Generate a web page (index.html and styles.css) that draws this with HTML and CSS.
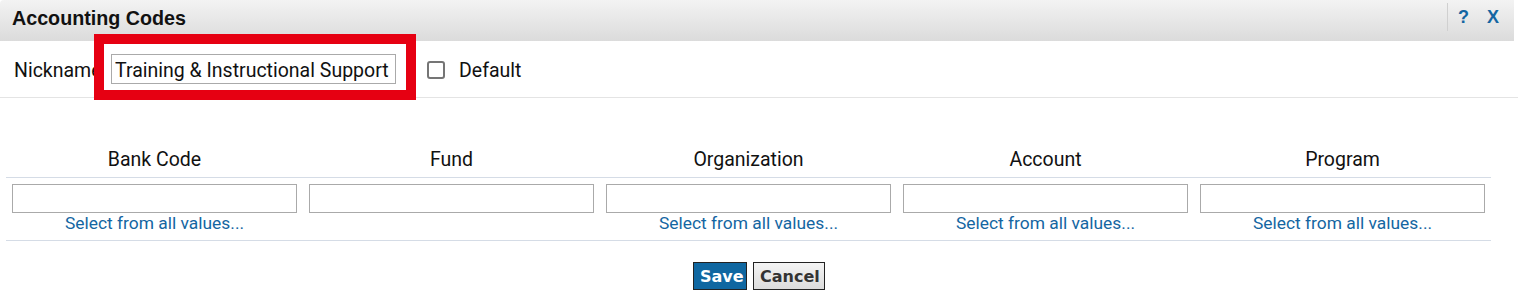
FILE: index.html
```html
<!DOCTYPE html>
<html lang="en">
<head>
    <meta charset="UTF-8">
    <title>Accounting Codes</title>
    <link rel="stylesheet" href="styles.css">
</head>
<body>
    <div class="dialog">
        <!-- Title bar -->
        <header class="titlebar">
            <h1>Accounting Codes</h1>
            <div class="tools">
                <a href="#" class="tool">?</a>
                <a href="#" class="tool">X</a>
            </div>
        </header>

        <!-- Nickname row -->
        <div class="nick-row">
            <label class="nick-label" for="nick">Nickname</label>
            <input id="nick" class="text-input nick-input" type="text" value="Training &amp; Instructional Support">
            <label class="default-check"><span class="box"></span>Default</label>
            <div class="highlight"></div>
        </div>

        <!-- Code segments -->
        <div class="codes">
            <div class="col-head">Bank Code</div>
            <div class="col-head">Fund</div>
            <div class="col-head">Organization</div>
            <div class="col-head">Account</div>
            <div class="col-head">Program</div>

            <div class="cell"><input class="text-input" type="text"><a href="#" class="pick">Select from all values...</a></div>
            <div class="cell"><input class="text-input" type="text"></div>
            <div class="cell"><input class="text-input" type="text"><a href="#" class="pick">Select from all values...</a></div>
            <div class="cell"><input class="text-input" type="text"><a href="#" class="pick">Select from all values...</a></div>
            <div class="cell"><input class="text-input" type="text"><a href="#" class="pick">Select from all values...</a></div>
        </div>

        <div class="actions">
            <button class="btn btn-save">Save</button>
            <button class="btn btn-cancel">Cancel</button>
        </div>
    </div>
</body>
</html>
```

FILE: styles.css
```css
/* Dialog layout */
body {
    margin: 0;
    background: #fff;
    font-family: Roboto, "Liberation Sans", sans-serif;
    color: #111;
}
.dialog {
    width: 1518px;
    height: 293px;
    overflow: hidden;
}
.titlebar {
    height: 41px;
    display: flex;
    align-items: center;
    justify-content: space-between;
    background: linear-gradient(#f3f3f3, #dbdbdb);
    border-top-left-radius: 4px;
    margin-right: 4px;
}
.titlebar h1 {
    margin: 0 0 0 12px;
    font-family: "Liberation Sans", Arial, sans-serif;
    font-size: 19.7px;
    font-weight: bold;
    color: #111;
    position: relative;
    top: -2px;
}
.tools {
    display: flex;
    align-items: center;
    height: 28px;
    border-left: 1px solid #d0d0d0;
    margin-bottom: 8px;
    padding-left: 10px;
}
.tool {
    font-family: "Liberation Sans", Arial, sans-serif;
    font-size: 18px;
    font-weight: bold;
    color: #1466a2;
    text-decoration: none;
    margin-right: 18px;
    line-height: 28px;
}
.tool:last-child {
    margin-right: 15px;
}

/* Nickname row */
.nick-row {
    position: relative;
    height: 56px;
    display: flex;
    align-items: center;
    border-bottom: 1px solid #e4e4e4;
    padding-left: 14px;
}
.nick-label {
    font-size: 19.5px;
    width: 97px;
    white-space: nowrap;
    padding-top: 2px;
}
.text-input {
    box-sizing: border-box;
    width: 285px;
    height: 29px;
    border: 1px solid #aaa;
    font-family: Roboto, sans-serif;
    font-size: 19.5px;
    padding: 0 3px;
    color: #111;
    outline: none;
}
.nick-input {
    height: 30px;
    padding-top: 2px;
}
.default-check {
    display: flex;
    align-items: center;
    font-size: 19.5px;
    margin-left: 31px;
    padding-top: 2px;
}
.default-check .box {
    width: 14px;
    height: 14px;
    border: 2px solid #757575;
    border-radius: 3px;
    margin-right: 14px;
}
.highlight {
    position: absolute;
    left: 94px;
    top: -7px;
    width: 302px;
    height: 46px;
    border: 10px solid #e60012;
    pointer-events: none;
}

/* Code grid */
.codes {
    display: grid;
    grid-template-columns: repeat(5, 297px);
    margin: 48px 0 0 6px;
    width: 1485px;
}
.col-head {
    height: 28px;
    padding-top: 3px;
    text-align: center;
    font-size: 19.5px;
    line-height: 21px;
    border-bottom: 1px solid #d5dce6;
}
.cell {
    height: 56px;
    padding-top: 6px;
    display: flex;
    flex-direction: column;
    align-items: center;
    border-bottom: 1px solid #d5dce6;
}
.pick {
    font-size: 17.4px;
    line-height: 21px;
    color: #1466a2;
    text-decoration: none;
}

/* Buttons */
.actions {
    display: flex;
    justify-content: center;
    gap: 6px;
    margin-top: 21px;
}
.btn {
    height: 28px;
    font-family: Tahoma, "DejaVu Sans", sans-serif;
    font-size: 16px;
    font-weight: bold;
    border: 1px solid #222;
    padding: 0 6px;
    cursor: pointer;
}
.btn-save {
    width: 54px;
    background: #0f67a1;
    color: #fff;
}
.btn-cancel {
    width: 72px;
    background: linear-gradient(#f4f4f4, #dcdcdc);
    color: #333;
}
```
